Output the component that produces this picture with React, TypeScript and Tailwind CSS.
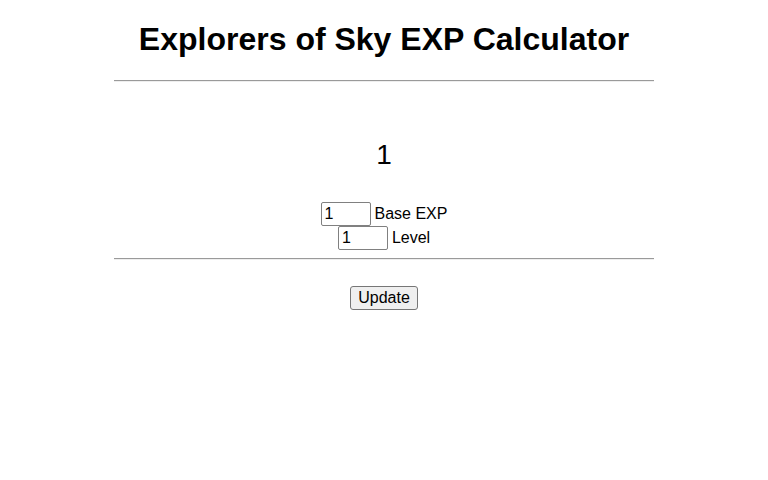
import { useState } from 'react';

export default function App() {
  const [baseExp, setBaseExp] = useState('1');
  const [level, setLevel] = useState('1');
  const [result, setResult] = useState(1);

  const update = () => {
    const b = parseInt(baseExp, 10) || 0;
    const l = parseInt(level, 10) || 0;
    setResult(b * l);
  };

  return (
    <div className="min-h-[480px] bg-white text-black" style={{ fontFamily: '"Liberation Sans", Arial, sans-serif' }}>
      <div className="w-[540px] mx-auto pt-[21px] text-center">
        <h1 className="text-[32px] leading-[37px] font-bold">Explorers of Sky EXP Calculator</h1>
        <hr className="mt-[22px] border-0 border-t border-b border-t-[#9a9a9a] border-b-[#eeeeee]" />

        <div className="mt-[57px] text-[28px] leading-[32px]">{result}</div>

        <div className="mt-[31px] flex flex-col items-center">
          <div className="flex items-center justify-center gap-[4px] h-[24px]">
            <input
              value={baseExp}
              onChange={(e) => setBaseExp(e.target.value)}
              className="w-[50px] h-[24px] px-[3px] text-base border border-[#808080] rounded-[2px] outline-none"
            />
            <span className="text-base">Base EXP</span>
          </div>
          <div className="flex items-center justify-center gap-[4px] h-[24px]">
            <input
              value={level}
              onChange={(e) => setLevel(e.target.value)}
              className="w-[50px] h-[24px] px-[3px] text-base border border-[#808080] rounded-[2px] outline-none"
            />
            <span className="text-base">Level</span>
          </div>
        </div>

        <hr className="mt-[8px] border-0 border-t border-b border-t-[#9a9a9a] border-b-[#eeeeee]" />

        <button
          onClick={update}
          className="mt-[26px] h-[24px] px-[7px] text-base leading-[20px] bg-[#efefef] border border-[#767676] rounded-[3px]"
        >
          Update
        </button>
      </div>
    </div>
  );
}
